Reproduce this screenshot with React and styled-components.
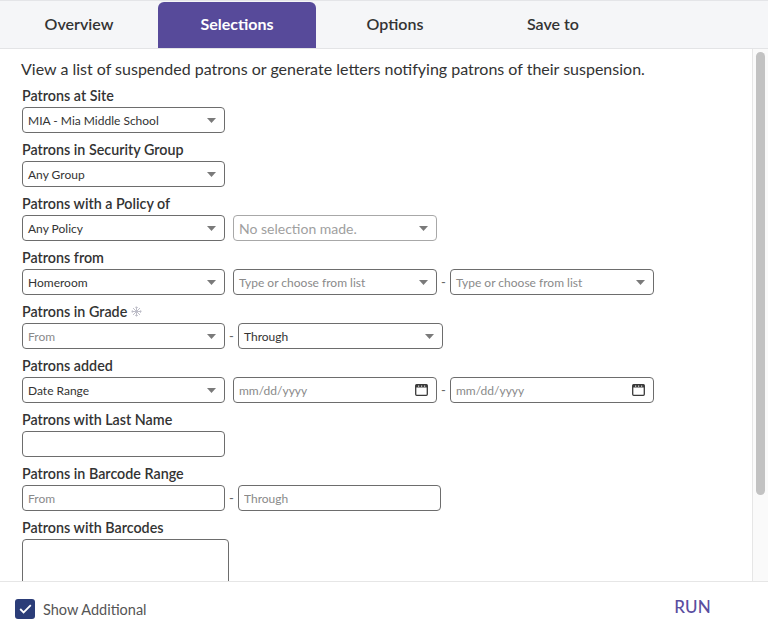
import React from "react";
import styled, { createGlobalStyle } from "styled-components";

const Global = createGlobalStyle`
  html, body { margin: 0; padding: 0; background: #fff; }
  body { font-family: Lato, "Open Sans", "Liberation Sans", sans-serif; }
  * { box-sizing: border-box; }
`;

const Frame = styled.div`
  width: 768px;
  height: 632px;
  display: flex;
  flex-direction: column;
  background: #fff;
  overflow: hidden;
`;

const TabBar = styled.div`
  height: 49px;
  flex: none;
  display: flex;
  align-items: stretch;
  padding-top: 1px;
  background: #f5f6f8;
  border-top: 1px solid #e4e5e8;
  border-bottom: 1px solid #e3e4e6;
`;

const Tab = styled.div`
  width: 158px;
  display: flex;
  align-items: center;
  justify-content: center;
  font-size: 16px;
  font-weight: ${(p) => (p.$active ? 700 : 600)};
  color: ${(p) => (p.$active ? "#ffffff" : "#333333")};
  background: ${(p) => (p.$active ? "#574a9a" : "transparent")};
  border-radius: 6px 6px 0 0;
  padding-bottom: 3px;
`;

const Body = styled.div`
  flex: 1;
  display: flex;
  min-height: 0;
  overflow: hidden;
`;

const Content = styled.div`
  flex: 1;
  padding: 10px 0 0 22px;
  overflow: hidden;
`;

const ScrollTrack = styled.div`
  width: 16px;
  flex: none;
  background: #fafafa;
  border-left: 1px solid #e6e6e6;
  padding: 3px 3px 0 3px;
`;

const Thumb = styled.div`
  height: 443px;
  border-radius: 5px;
  background: #c2c2c2;
`;

const Intro = styled.p`
  margin: 0 0 8px -1px;
  font-size: 16px;
  line-height: 20px;
  color: #333;
`;

const Field = styled.div`
  display: flex;
  flex-direction: column;
  gap: 3px;
  margin-bottom: 8px;
`;

const Label = styled.div`
  display: flex;
  align-items: center;
  gap: 4px;
  font-size: 14.3px;
  line-height: 17px;
  font-weight: 600;
  color: #333;
`;

const Row = styled.div`
  display: flex;
  align-items: center;
  gap: 8px;
`;

const Range = styled.div`
  display: flex;
  align-items: center;
  gap: 4px;
`;

const Dash = styled.span`
  font-size: 13px;
  color: #666;
  width: 5px;
  text-align: center;
`;

const Box = styled.div`
  width: ${(p) => p.$w || 204}px;
  height: 26px;
  display: flex;
  align-items: center;
  justify-content: space-between;
  padding: 0 8px 0 5px;
  border: 1px solid ${(p) => (p.$disabled ? "#a8a8a8" : "#6d6d6d")};
  border-radius: 4px;
  background: #fff;
  font-size: ${(p) => (p.$big ? "14px" : "12px")};
  color: ${(p) => (p.$muted ? "#8a8a8a" : p.$disabled ? "#a0a0a0" : "#333")};
  white-space: nowrap;
`;

const TextInput = styled.input`
  width: ${(p) => p.$w || 204}px;
  height: 26px;
  border: 1px solid #6d6d6d;
  border-radius: 4px;
  padding: 0 5px;
  font-family: inherit;
  font-size: 12px;
  color: #333;
  outline: none;
  &::placeholder { color: #8a8a8a; }
`;

const TextArea = styled.textarea`
  width: 207px;
  height: 72px;
  border: 1px solid #6d6d6d;
  border-radius: 4px;
  resize: none;
  font-family: inherit;
  outline: none;
`;

const Footer = styled.div`
  height: 51px;
  flex: none;
  display: flex;
  align-items: center;
  justify-content: space-between;
  padding: 0 57px 2px 15px;
  border-top: 1px solid #e6e6e6;
`;

const Check = styled.label`
  display: flex;
  align-items: center;
  gap: 8px;
  font-size: 14.5px;
  color: #555;
  padding-top: 6px;
`;

const CheckMark = styled.span`
  width: 20px;
  height: 20px;
  border-radius: 3px;
  background: #2b3d78;
  display: flex;
  align-items: center;
  justify-content: center;
`;

const Run = styled.button`
  border: 0;
  background: none;
  padding: 0;
  font-family: inherit;
  font-size: 17px;
  font-weight: 500;
  color: #5a4e9f;
  letter-spacing: 0.2px;
`;

const Caret = () => (
  <svg width="9" height="5" viewBox="0 0 9 5">
    <polygon points="0,0 9,0 4.5,5" fill="#7a7a7a" />
  </svg>
);

const Calendar = () => (
  <svg width="13" height="12" viewBox="0 0 13 12">
    <rect x="0.7" y="0.7" width="11.6" height="10.6" rx="1" fill="none" stroke="#3a3a3a" strokeWidth="1.3" />
    <rect x="0.7" y="0.7" width="11.6" height="2.8" fill="#3a3a3a" />
    <rect x="3" y="1.6" width="1.2" height="1" fill="#fff" />
    <rect x="6" y="1.6" width="1.2" height="1" fill="#fff" />
    <rect x="9" y="1.6" width="1.2" height="1" fill="#fff" />
  </svg>
);

const Flake = () => (
  <svg width="11" height="11" viewBox="0 0 11 11" stroke="#b9b9c4" strokeWidth="0.9" fill="none">
    <line x1="5.5" y1="0.5" x2="5.5" y2="10.5" />
    <line x1="0.5" y1="5.5" x2="10.5" y2="5.5" />
    <line x1="2" y1="2" x2="9" y2="9" />
    <line x1="9" y1="2" x2="2" y2="9" />
    <polyline points="4.2,1 5.5,2.3 6.8,1" />
    <polyline points="4.2,10 5.5,8.7 6.8,10" />
    <polyline points="1,4.2 2.3,5.5 1,6.8" />
    <polyline points="10,4.2 8.7,5.5 10,6.8" />
  </svg>
);

const Select = ({ children, ...rest }) => (
  <Box {...rest}>
    <span>{children}</span>
    <Caret />
  </Box>
);

const DateBox = ({ w }) => (
  <Box $w={w} $muted>
    <span>mm/dd/yyyy</span>
    <Calendar />
  </Box>
);

const tabs = ["Overview", "Selections", "Options", "Save to"];

export default function App() {
  return (
    <>
      <Global />
      <Frame>
        <TabBar>
          {tabs.map((t) => (
            <Tab key={t} $active={t === "Selections"}>{t}</Tab>
          ))}
        </TabBar>
        <Body>
          <Content>
            <Intro>View a list of suspended patrons or generate letters notifying patrons of their suspension.</Intro>

            <Field>
              <Label>Patrons at Site</Label>
              <Select $w={203}>MIA - Mia Middle School</Select>
            </Field>

            <Field>
              <Label>Patrons in Security Group</Label>
              <Select $w={203}>Any Group</Select>
            </Field>

            <Field>
              <Label>Patrons with a Policy of</Label>
              <Row>
                <Select $w={203}>Any Policy</Select>
                <Select $w={204} $disabled $big>No selection made.</Select>
              </Row>
            </Field>

            <Field>
              <Label>Patrons from</Label>
              <Row>
                <Select $w={203}>Homeroom</Select>
                <Range>
                  <Select $w={204} $muted>Type or choose from list</Select>
                  <Dash>-</Dash>
                  <Select $w={204} $muted>Type or choose from list</Select>
                </Range>
              </Row>
            </Field>

            <Field>
              <Label>Patrons in Grade <Flake /></Label>
              <Range>
                <Select $w={203} $muted>From</Select>
                <Dash>-</Dash>
                <Select $w={205}>Through</Select>
              </Range>
            </Field>

            <Field>
              <Label>Patrons added</Label>
              <Row>
                <Select $w={203}>Date Range</Select>
                <Range>
                  <DateBox w={204} />
                  <Dash>-</Dash>
                  <DateBox w={204} />
                </Range>
              </Row>
            </Field>

            <Field>
              <Label>Patrons with Last Name</Label>
              <TextInput $w={203} />
            </Field>

            <Field>
              <Label>Patrons in Barcode Range</Label>
              <Range>
                <TextInput $w={203} placeholder="From" />
                <Dash>-</Dash>
                <TextInput $w={203} placeholder="Through" />
              </Range>
            </Field>

            <Field>
              <Label>Patrons with Barcodes</Label>
              <TextArea />
            </Field>
          </Content>
          <ScrollTrack>
            <Thumb />
          </ScrollTrack>
        </Body>
        <Footer>
          <Check>
            <CheckMark>
              <svg width="13" height="10" viewBox="0 0 13 10">
                <polyline points="1.2,5 4.6,8.4 11.8,1.2" fill="none" stroke="#fff" strokeWidth="1.8" />
              </svg>
            </CheckMark>
            Show Additional
          </Check>
          <Run>RUN</Run>
        </Footer>
      </Frame>
    </>
  );
}
